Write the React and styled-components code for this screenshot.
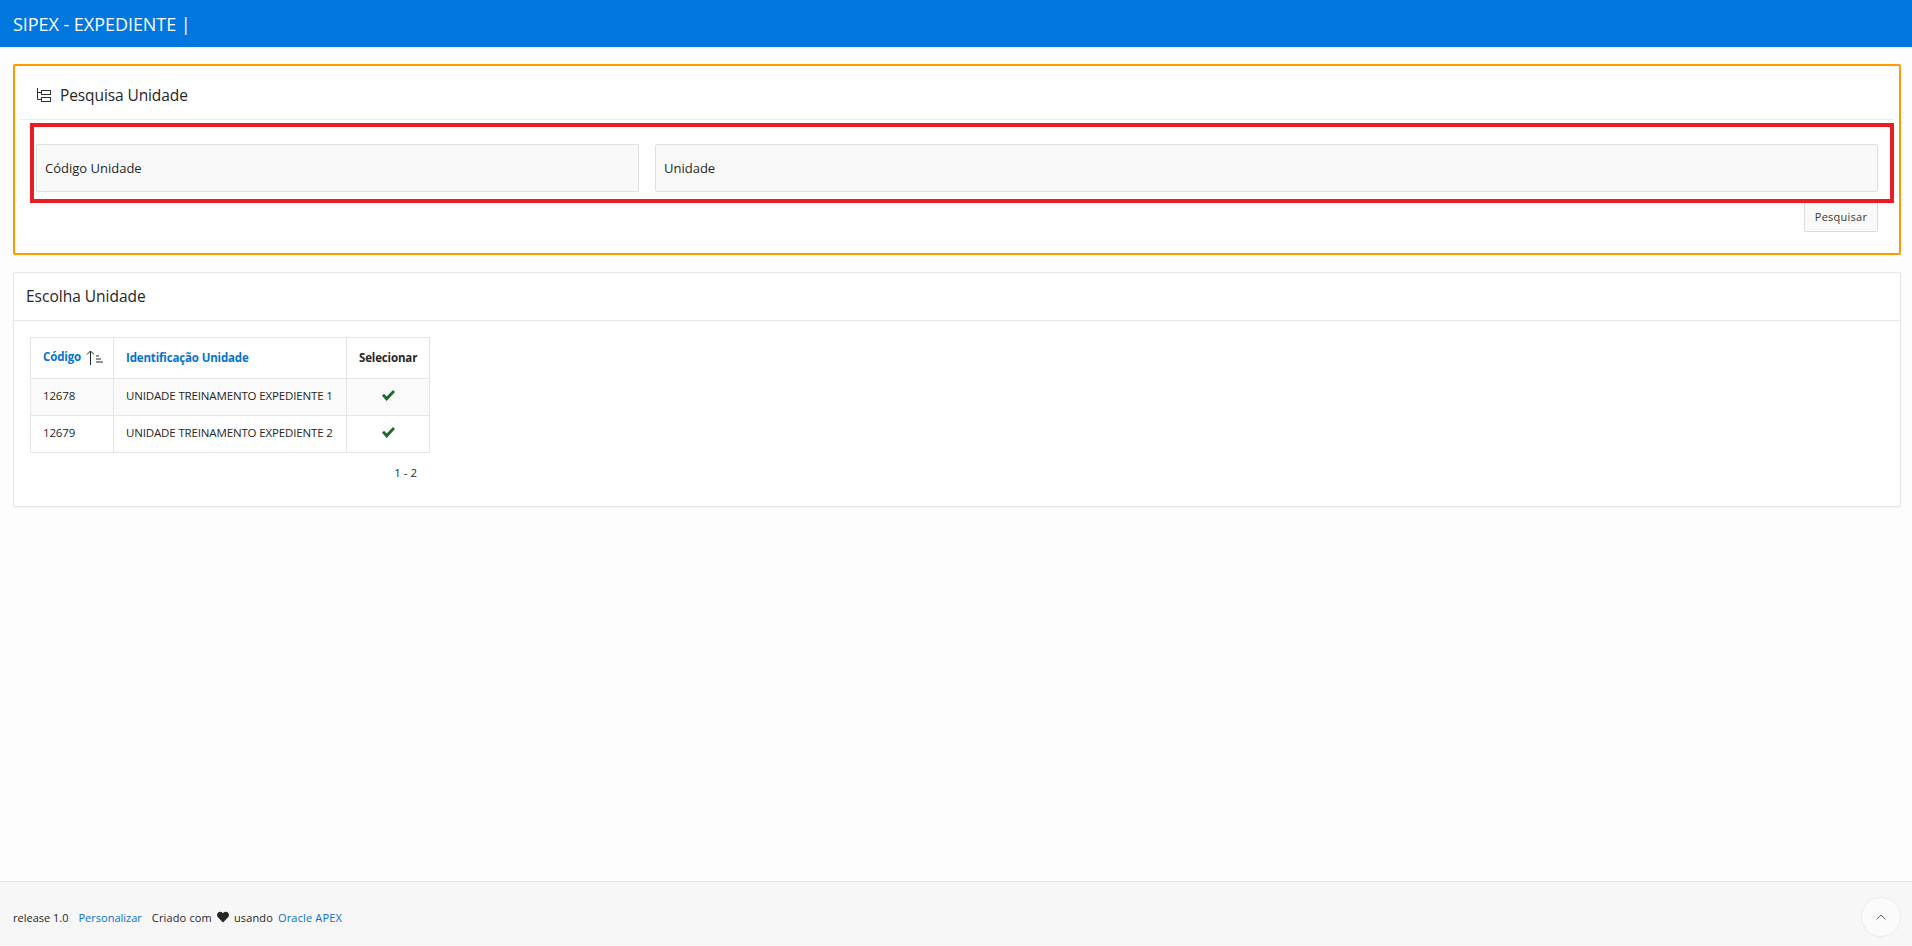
import React from "react";
import styled, { createGlobalStyle } from "styled-components";
import { FaHeart } from "react-icons/fa";

const Global = createGlobalStyle`
  html, body { margin: 0; padding: 0; background: #fdfdfd; }
  * { box-sizing: border-box; }
  body { font-family: "Open Sans", "Noto Sans", "Liberation Sans", sans-serif; color: #262626; }
`;

const Page = styled.div`
  display: flex;
  flex-direction: column;
  min-height: 946px;
  height: 946px;
`;
const TopBar = styled.header`
  height: 47px;
  flex: none;
  background: #0076df;
  color: #fff;
  display: flex;
  align-items: center;
  padding: 0 13px;
  font-size: 18px;
  letter-spacing: -0.05px;
  box-shadow: 0 1px 0 #e6eef6;
`;
const Main = styled.main`
  flex: 1;
  padding: 17px 11px 0 13px;
  display: flex;
  flex-direction: column;
  gap: 17px;
`;
const SearchCard = styled.section`
  position: relative;
  height: 191px;
  background: #fff;
  border: 2px solid #ff9a00;
  border-radius: 2px;
  padding: 0 5px;
`;
const SearchHead = styled.div`
  height: 54px;
  display: flex;
  align-items: center;
  gap: 9px;
  padding: 4px 0 0 16px;
  border-bottom: 1px solid #ececec;
  font-size: 15.5px;
  font-weight: 500;
  letter-spacing: -0.1px;
`;
const Fields = styled.div`
  display: grid;
  grid-template-columns: 603px 1fr;
  gap: 16px;
  margin: 24px 16px 0 16px;
`;
const Field = styled.div`
  height: 48px;
  background: #f9f9f9;
  border: 1px solid #e0e0e0;
  border-radius: 2px;
  display: flex;
  align-items: center;
  padding-left: 8px;
  font-size: 13px;
`;
const Actions = styled.div`
  display: flex;
  justify-content: flex-end;
  margin: 8px 16px 0 0;
`;
const Button = styled.button`
  width: 74px;
  height: 32px;
  background: #f9f9f9;
  border: 1px solid #dcdcdc;
  border-radius: 2px;
  font: 400 11px "Open Sans", sans-serif;
  letter-spacing: 0.25px;
  color: #383838;
  padding: 0;
`;
const Annotation = styled.div`
  position: absolute;
  left: 15px;
  top: 57px;
  width: 1864px;
  height: 80px;
  border: 4px solid #ec1c24;
  pointer-events: none;
`;
const ResultCard = styled.section`
  height: 235px;
  background: #fff;
  border: 1px solid #e6e6e6;
  border-radius: 2px;
  box-shadow: 0 1px 2px rgba(0, 0, 0, 0.04);
`;
const ResultHead = styled.h2`
  margin: 0;
  height: 48px;
  display: flex;
  align-items: center;
  padding: 0 0 2px 12px;
  border-bottom: 1px solid #e8e8e8;
  font-size: 15.5px;
  font-weight: 500;
`;
const ResultBody = styled.div`
  padding: 16px 0 0 16px;
`;
const Table = styled.table`
  border-collapse: collapse;
  table-layout: fixed;
  width: 399px;
  font-size: 11.5px;
  letter-spacing: -0.15px;
`;
const Th = styled.th`
  height: 41px;
  padding: 0 12px 2px;
  border: 1px solid #e6e6e6;
  background: #fff;
  text-align: ${(p) => p.$align || "left"};
  color: ${(p) => (p.$link ? "#0572ce" : "#262626")};
  font-weight: 700;
  white-space: nowrap;
`;
const Td = styled.td`
  height: 37px;
  padding: 0 12px 3px;
  border: 1px solid #e6e6e6;
  background: ${(p) => (p.$odd ? "#fafafa" : "#fff")};
  text-align: ${(p) => p.$align || "left"};
  white-space: nowrap;
`;
const CheckSvg = styled.svg`
  display: block;
  margin: 0 auto;
  color: #1d6a2c;
`;
const SortIcon = styled.svg`
  margin-left: 5px;
  vertical-align: -4px;
`;
const Pager = styled.div`
  width: 399px;
  padding-right: 12px;
  margin-top: 12px;
  text-align: right;
  font-size: 11.5px;
  line-height: 16px;
`;
const Footer = styled.footer`
  height: 65px;
  flex: none;
  background: #f7f7f7;
  border-top: 1px solid #e6e6e6;
  display: flex;
  align-items: center;
  justify-content: space-between;
  padding: 6px 11px 0 13px;
  font-size: 11px;
`;
const FooterText = styled.div`
  display: flex;
  align-items: center;
  gap: 10px;
`;
const Group = styled.span`
  display: inline-flex;
  align-items: center;
  gap: 5px;
  letter-spacing: 0.15px;
`;
const Link = styled.a`
  color: #0572ce;
`;
const TopButton = styled.button`
  width: 40px;
  height: 40px;
  border-radius: 50%;
  background: #fbfbfb;
  border: 1px solid #ececec;
  padding: 0;
  display: flex;
  align-items: center;
  justify-content: center;
`;

const TreeIcon = () => (
  <svg width="15" height="14" viewBox="0 0 15 14" fill="none" stroke="#333" strokeWidth="1">
    <path d="M1.5 0v11.5H5M1.5 4.5H5" />
    <rect x="5.5" y="2.5" width="9" height="4" />
    <rect x="5.5" y="9.5" width="9" height="4" />
  </svg>
);

const CheckMark = () => (
  <CheckSvg width="13" height="11" viewBox="0 0 13 11" fill="currentColor">
    <path d="M0 5.8 2 3.8 4.7 6.5 11 0l2 2-8.300 9z" />
  </CheckSvg>
);

export default function App() {
  return (
    <Page>
      <Global />
      <TopBar>SIPEX - EXPEDIENTE |</TopBar>
      <Main>
        <SearchCard>
          <SearchHead>
            <TreeIcon />
            Pesquisa Unidade
          </SearchHead>
          <Fields>
            <Field>Código Unidade</Field>
            <Field>Unidade</Field>
          </Fields>
          <Actions>
            <Button>Pesquisar</Button>
          </Actions>
          <Annotation />
        </SearchCard>
        <ResultCard>
          <ResultHead>Escolha Unidade</ResultHead>
          <ResultBody>
            <Table>
              <colgroup>
                <col style={{ width: 83 }} />
                <col style={{ width: 233 }} />
                <col style={{ width: 83 }} />
              </colgroup>
              <thead>
                <tr>
                  <Th $link>
                    Código
                    <SortIcon width="18" height="15" viewBox="0 0 18 15" fill="none" stroke="#262626" strokeWidth="1">
                      <path d="M4.5 15V1M1 4.5 4.5 1 8 4.5M10 6h3M10 9h5M10 12h7" />
                    </SortIcon>
                  </Th>
                  <Th $link>Identificação Unidade</Th>
                  <Th $align="center">Selecionar</Th>
                </tr>
              </thead>
              <tbody>
                <tr>
                  <Td $odd>12678</Td>
                  <Td $odd>UNIDADE TREINAMENTO EXPEDIENTE 1</Td>
                  <Td $odd $align="center"><CheckMark /></Td>
                </tr>
                <tr>
                  <Td>12679</Td>
                  <Td>UNIDADE TREINAMENTO EXPEDIENTE 2</Td>
                  <Td $align="center"><CheckMark /></Td>
                </tr>
              </tbody>
            </Table>
            <Pager>1 - 2</Pager>
          </ResultBody>
        </ResultCard>
      </Main>
      <Footer>
        <FooterText>
          <span>release 1.0</span>
          <Link>Personalizar</Link>
          <Group>
            Criado com <FaHeart size={12} color="#262626" /> usando <Link>Oracle APEX</Link>
          </Group>
        </FooterText>
        <TopButton aria-label="Topo">
          <svg width="10" height="6" viewBox="0 0 10 6" fill="none" stroke="#6e6e6e" strokeWidth="1">
            <path d="M.5 5.5 5 1l4.5 4.5" />
          </svg>
        </TopButton>
      </Footer>
    </Page>
  );
}
